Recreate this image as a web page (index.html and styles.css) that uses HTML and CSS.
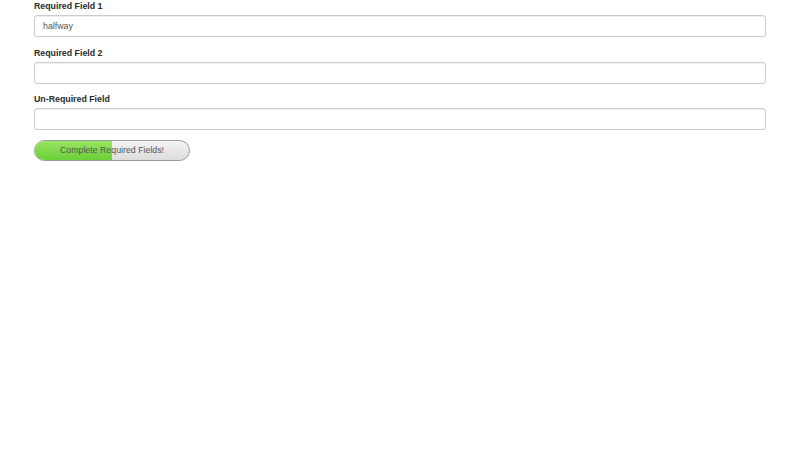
FILE: index.html
```html
<!DOCTYPE html>
<html>
<head>
<meta charset="utf-8">
<link rel="stylesheet" href="styles.css">
</head>
<body>
<form class="form">
  <div class="group">
    <label class="label">Required Field 1</label>
    <input class="field" type="text" value="halfway">
  </div>
  <div class="group">
    <label class="label">Required Field 2</label>
    <input class="field" type="text">
  </div>
  <div class="group">
    <label class="label">Un-Required Field</label>
    <input class="field" type="text">
  </div>
  <button class="progress-btn" type="button">
    <span class="progress-fill" style="width: 50%"></span>
    <span class="progress-text">Complete Required Fields!</span>
  </button>
</form>
</body>
</html>
```

FILE: styles.css
```css
html, body {
  margin: 0;
  padding: 0;
  background: #fff;
}
body {
  font-family: "Liberation Sans", Arial, sans-serif;
  color: #333;
}
.form {
  margin: 0 34px;
  display: flex;
  flex-direction: column;
  align-items: flex-start;
}
.group {
  display: flex;
  flex-direction: column;
  align-self: stretch;
  margin-bottom: 9.5px;
}
.label {
  font-size: 8.8px;
  font-weight: bold;
  line-height: 12px;
  margin-bottom: 3px;
  color: #2a2a2a;
}
.field {
  box-sizing: border-box;
  height: 22px;
  width: 100%;
  margin: 0;
  padding: 0 8px;
  font-family: "Liberation Sans", Arial, sans-serif;
  font-size: 8.8px;
  color: #555;
  border: 1px solid #ccc;
  border-radius: 3px;
  box-shadow: inset 0 1px 1px rgba(0,0,0,0.075);
  outline: none;
}
.progress-btn {
  position: relative;
  box-sizing: border-box;
  width: 156px;
  height: 21.5px;
  margin: 0;
  padding: 0;
  border: 1px solid #9a9a9a;
  border-radius: 11px;
  overflow: hidden;
  background: linear-gradient(#f4f4f4, #dcdcdc);
  font-family: "Liberation Sans", Arial, sans-serif;
  font-size: 8.8px;
  color: #555;
  cursor: pointer;
}
.progress-fill {
  position: absolute;
  left: 0;
  top: 0;
  bottom: 0;
  background: linear-gradient(#98e462, #6bcf38);
}
.progress-text {
  position: relative;
}
```
